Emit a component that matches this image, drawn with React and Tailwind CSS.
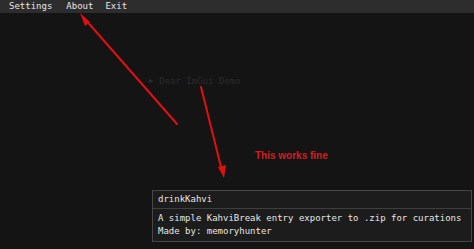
export default function App() {
  const mono = { fontFamily: '"DejaVu Sans Mono", monospace' }
  return (
    <div className="relative w-[474px] h-[249px] overflow-hidden bg-[#141414] text-[9px] leading-none text-[#e6e6e6]" style={mono}>
      <div className="flex items-center h-[13px] bg-[#2d2d2d]">
        <span className="ml-[9px]">Settings</span>
        <span className="ml-[14px]">About</span>
        <span className="ml-[12px]">Exit</span>
      </div>

      {/* collapsed demo window */}
      <div className="absolute left-[149px] top-[77px] flex items-center gap-[6px] text-[#2b2b2e]">
        <span className="text-[7px]">▶</span>
        <span>Dear ImGui Demo</span>
      </div>

      <div className="absolute left-[255px] top-[151px] text-[10px] font-bold text-[#d41d1d]" style={{ fontFamily: '"Liberation Sans", sans-serif' }}>
        This works fine
      </div>

      {/* about window */}
      <div className="absolute left-[152px] top-[190px] w-[320px] h-[52px] border border-[#474747] bg-[#1c1c1c] flex flex-col">
        <div className="h-[18px] flex items-center pl-[5px] border-b border-[#3e3e3e]">drinkKahvi</div>
        <div className="pl-[5px] pt-[5px] flex flex-col gap-[4px]">
          <span>A simple KahviBreak entry exporter to .zip for curations</span>
          <span>Made by: memoryhunter</span>
        </div>
      </div>

      <svg className="absolute left-0 top-0" width="474" height="249" viewBox="0 0 474 249">
        <g stroke="#e01010" strokeWidth="2" fill="none" strokeLinecap="round">
          <line x1="177" y1="124" x2="84" y2="18" />
          <line x1="201" y1="87" x2="222" y2="171" />
        </g>
        <polygon points="80,13 90,22 85,26" fill="#e01010" />
        <polygon points="224,178 218,167 226,165" fill="#e01010" />
      </svg>
    </div>
  )
}
